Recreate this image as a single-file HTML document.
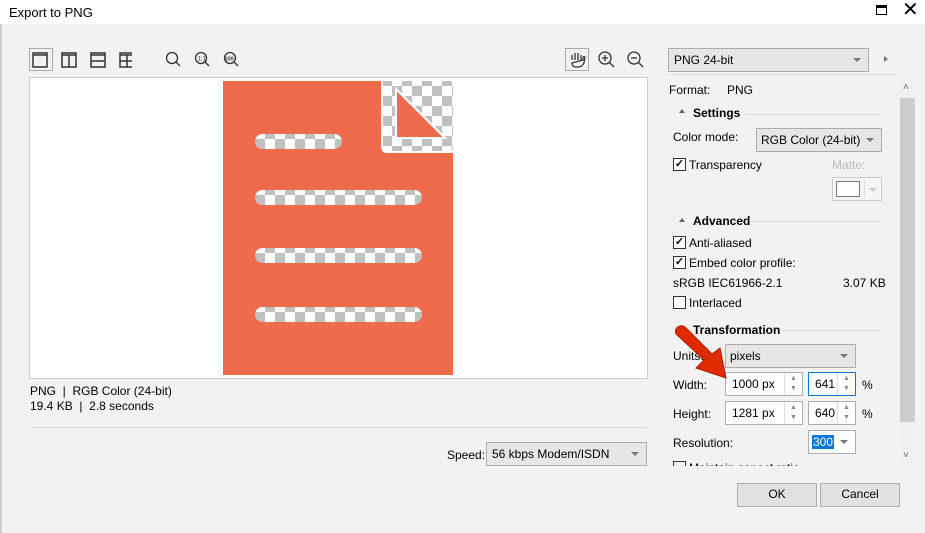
<!DOCTYPE html><html><head><style>
*{box-sizing:border-box}
body{margin:0;width:925px;height:533px;overflow:hidden;font-family:"Liberation Sans",sans-serif;font-size:12px;color:#000;background:#f2f2f2;position:relative}
.a{position:absolute}
.chk{background-color:#fff;background-image:conic-gradient(#c0c0c0 25%,#fff 25% 50%,#c0c0c0 50% 75%,#fff 75%);background-size:20px 20px}
.bar{position:absolute;height:15px;border-radius:8px;background-position:0 -5px}
.dd{position:absolute;background:#e6e6e6;border:1px solid #adadad}
.dd:after{content:"";position:absolute;right:7px;top:50%;margin-top:-2px;border:4px solid transparent;border-top:4px solid #777;border-bottom:0}
.cb{position:absolute;width:13px;height:13px;border:1px solid #333;background:#fff;font-size:11px;line-height:11px;text-align:center;font-weight:bold}
.in{position:absolute;background:#fff;border:1px solid #adadad;height:24px;padding:4px 6px}
.sp{position:absolute;top:0;right:0;width:18px;height:100%;border-left:1px solid #ddd;color:#888;font-size:7px;text-align:center;line-height:10px;padding-top:1px}
.btn{position:absolute;background:#e1e1e1;border:1px solid #adadad;text-align:center;line-height:20px}
.line{position:absolute;height:1px;background:#ddd}
svg{position:absolute}
</style></head><body>
<div class="a" style="left:0;top:0;width:925px;height:24px;background:#fff"></div>
<div class="a" style="left:9px;top:5px;font-size:13px">Export to PNG</div>
<div class="a" style="left:876px;top:5px;width:11px;height:10px;border:1.5px solid #000;border-top-width:3px"></div>
<div class="a" style="left:902px;top:-3px;font-size:20px">✕</div>
<div class="a" style="left:0;top:24px;width:2px;height:509px;background:#ccc"></div>

<div class="a" style="left:29px;top:48px;width:24px;height:23px;border:1px solid #aaa"></div>
<svg style="left:32px;top:51px" width="100" height="18" fill="none" stroke="#333" stroke-width="1.5">
<rect x="1" y="2" width="14" height="14"/><line x1="1" y1="4" x2="15" y2="4"/>
<rect x="30" y="2" width="14" height="14"/><line x1="30" y1="4" x2="44" y2="4"/><line x1="37" y1="4" x2="37" y2="16"/>
<rect x="59" y="2" width="14" height="14"/><line x1="59" y1="4" x2="73" y2="4"/><line x1="59" y1="10" x2="73" y2="10"/>
<rect x="88" y="2" width="14" height="14"/><line x1="88" y1="4" x2="102" y2="4"/><line x1="95" y1="4" x2="95" y2="16"/><line x1="88" y1="10" x2="102" y2="10"/>
</svg>
<svg style="left:165px;top:51px" width="80" height="20" fill="none" stroke="#333" stroke-width="1.3">
<circle cx="7" cy="7" r="5.5"/><line x1="11" y1="11" x2="15" y2="15"/>
<circle cx="36" cy="7" r="5.5"/><line x1="40" y1="11" x2="44" y2="15"/>
<circle cx="65" cy="7" r="5.5"/><line x1="69" y1="11" x2="73" y2="15"/>
<text x="32.5" y="9.5" font-size="6" fill="#333" stroke="none" font-family="Liberation Sans">1:1</text>
<text x="59.5" y="9.5" font-size="5.5" fill="#333" stroke="none" font-family="Liberation Sans" font-weight="bold">100</text>
</svg>
<div class="a" style="left:565px;top:48px;width:24px;height:23px;border:1px solid #aaa"></div>
<svg style="left:568px;top:50px" width="80" height="20" fill="none" stroke="#333" stroke-width="1.3">
<path d="M4 10V5M7 10V3M10 10V3M13 10V5M15 10V8q0-2 2-1l-1 6q-2 4-6 4h-2q-4 0-4-4z"/>
<circle cx="37" cy="8" r="6"/><line x1="41" y1="12" x2="46" y2="17"/><line x1="34" y1="8" x2="40" y2="8"/><line x1="37" y1="5" x2="37" y2="11"/>
<circle cx="66" cy="8" r="6"/><line x1="70" y1="12" x2="75" y2="17"/><line x1="63" y1="8" x2="69" y2="8"/>
</svg>

<div class="a" style="left:29px;top:77px;width:619px;height:302px;background:#fff;border:1px solid #ccc"></div>
<div class="a" style="left:223px;top:81px;width:230px;height:294px;background:#ee6c4d"></div>
<div class="a chk" style="left:381px;top:81px;width:72px;height:72px;border-bottom-left-radius:6px;border:2px solid #fff;border-top:0;border-right:0;background-position:-1px 5px"></div>
<svg style="left:381px;top:81px" width="72" height="72"><polygon points="15,8 15,57 64,57" fill="#ee6c4d" stroke="#fff" stroke-width="2"/></svg>
<div class="bar chk" style="left:255px;top:134px;width:87px"></div>
<div class="bar chk" style="left:255px;top:190px;width:167px"></div>
<div class="bar chk" style="left:255px;top:248px;width:167px"></div>
<div class="bar chk" style="left:255px;top:307px;width:167px"></div>

<div class="a" style="left:30px;top:384px">PNG &nbsp;| &nbsp;RGB Color (24-bit)</div>
<div class="a" style="left:30px;top:399px">19.4 KB &nbsp;| &nbsp;2.8 seconds</div>
<div class="line" style="left:29px;top:427px;width:618px"></div>
<div class="a" style="left:447px;top:448px">Speed:</div>
<div class="dd" style="left:486px;top:442px;width:161px;height:24px;padding:4px 5px">56 kbps Modem/ISDN</div>

<div class="dd" style="left:668px;top:48px;width:201px;height:24px;padding:4px 5px">PNG 24-bit</div>
<div class="a" style="left:884px;top:56px;border:3px solid transparent;border-left:4px solid #777;border-right:0"></div>
<div class="line" style="left:668px;top:74px;width:230px"></div>
<div class="a" style="left:900px;top:81px;width:15px;height:385px;background:#f0f0f0"></div>
<div class="a" style="left:900px;top:98px;width:15px;height:324px;background:#cdcdcd"></div>
<div class="a" style="left:903px;top:82px;color:#666;font-size:10px">˄</div>
<div class="a" style="left:903px;top:450px;color:#666;font-size:10px">˅</div>

<div class="a" style="left:669px;top:83px">Format: &nbsp;&nbsp;&nbsp;&nbsp;PNG</div>
<div class="a" style="left:679px;top:109px;border:3px solid transparent;border-bottom:4px solid #666;border-top:0"></div>
<div class="a" style="left:693px;top:106px;font-weight:bold">Settings</div>
<div class="line" style="left:745px;top:114px;width:138px"></div>
<div class="a" style="left:673px;top:130px">Color mode:</div>
<div class="dd" style="left:756px;top:128px;width:126px;height:24px;padding:4px 4px">RGB Color (24-bit)</div>
<div class="cb" style="left:673px;top:158px">✓</div>
<div class="a" style="left:689px;top:158px">Transparency</div>
<div class="a" style="left:832px;top:158px;color:#bbb">Matte:</div>
<div class="a" style="left:832px;top:177px;width:50px;height:24px;border:1px solid #ccc;background:#f5f5f5"></div>
<div class="a" style="left:836px;top:181px;width:24px;height:16px;border:1px solid #777;background:#fff"></div>
<div class="a" style="left:864px;top:180px;width:1px;height:18px;background:#ddd"></div>
<div class="a" style="left:869px;top:188px;border:4px solid transparent;border-top:4px solid #ccc;border-bottom:0"></div>
<div class="a" style="left:679px;top:218px;border:3px solid transparent;border-bottom:4px solid #666;border-top:0"></div>
<div class="a" style="left:693px;top:214px;font-weight:bold">Advanced</div>
<div class="line" style="left:751px;top:221px;width:132px"></div>
<div class="cb" style="left:673px;top:236px">✓</div>
<div class="a" style="left:689px;top:236px">Anti-aliased</div>
<div class="cb" style="left:673px;top:256px">✓</div>
<div class="a" style="left:689px;top:256px">Embed color profile:</div>
<div class="a" style="left:673px;top:276px">sRGB IEC61966-2.1</div>
<div class="a" style="left:843px;top:276px">3.07 KB</div>
<div class="cb" style="left:673px;top:296px"></div>
<div class="a" style="left:689px;top:296px">Interlaced</div>
<div class="a" style="left:693px;top:323px;font-weight:bold">Transformation</div>
<div class="line" style="left:783px;top:330px;width:100px"></div>
<div class="a" style="left:673px;top:349px">Units:</div>
<div class="dd" style="left:725px;top:344px;width:131px;height:24px;padding:4px 4px">pixels</div>
<div class="a" style="left:673px;top:378px">Width:</div>
<div class="in" style="left:725px;top:372px;width:78px">1000 px<div class="sp">▲<br>▼</div></div>
<div class="in" style="left:808px;top:372px;width:48px;border-color:#0078d7">641<div class="sp">▲<br>▼</div></div>
<div class="a" style="left:862px;top:378px">%</div>
<div class="a" style="left:673px;top:407px">Height:</div>
<div class="in" style="left:725px;top:401px;width:78px">1281 px<div class="sp">▲<br>▼</div></div>
<div class="in" style="left:808px;top:401px;width:48px">640<div class="sp">▲<br>▼</div></div>
<div class="a" style="left:862px;top:407px">%</div>
<div class="a" style="left:673px;top:436px">Resolution:</div>
<div class="dd" style="left:808px;top:430px;width:48px;height:24px;background:#fff"><span style="position:absolute;left:3px;top:4px;background:#0078d7;color:#fff;padding:0 1px">300</span></div>
<div class="a" style="left:673px;top:461px;width:220px;height:5px;overflow:hidden"><div style="position:absolute;top:0;left:0;width:13px;height:13px;border:1px solid #333"></div><div style="position:absolute;left:16px;top:0">Maintain aspect ratio</div></div>

<svg style="left:668px;top:322px" width="65" height="60"><path d="M12 4 Q6 6 8 12 L36 38 L28 46 L58 56 L52 26 L44 32 L18 6 Q15 3 12 4Z" fill="#e02a00" stroke="#a81e00" stroke-width="1"/></svg>

<div class="btn" style="left:737px;top:483px;width:80px;height:24px">OK</div>
<div class="btn" style="left:820px;top:483px;width:80px;height:24px">Cancel</div>
</body></html>
